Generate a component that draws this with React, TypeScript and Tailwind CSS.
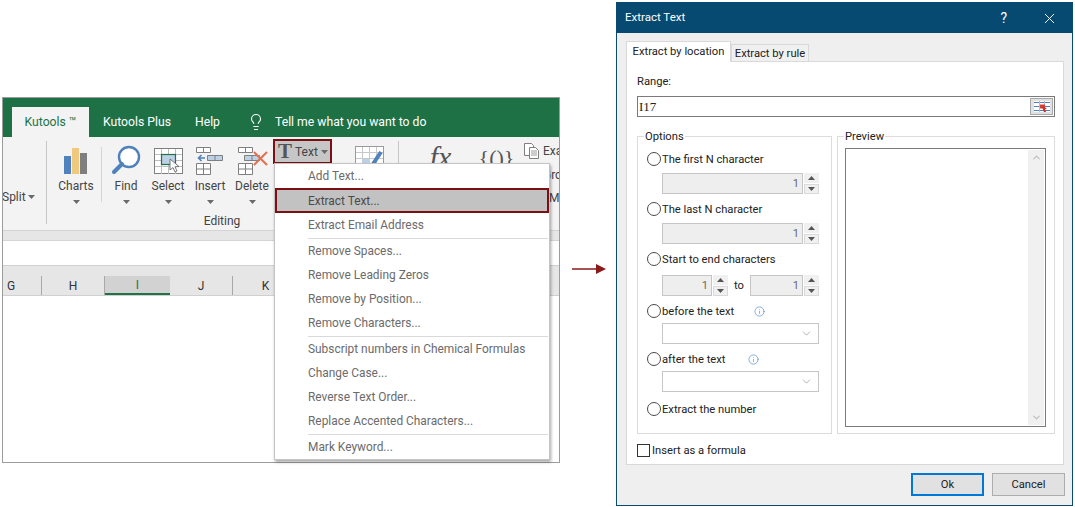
import { Lightbulb, X, ChevronDown, ChevronUp, Info } from "lucide-react";

function Caret({ className = "" }: { className?: string }) {
  return (
    <svg width="7" height="4" viewBox="0 0 7 4" className={className}>
      <path d="M0 0h7L3.5 4z" fill="#6a6a6a" />
    </svg>
  );
}

function ChartsIcon() {
  return (
    <svg width="24" height="27" viewBox="0 0 24 27">
      <rect x="0" y="8" width="7" height="18" fill="#4f81bd" />
      <rect x="8" y="0" width="7" height="26" fill="#f0c97f" />
      <rect x="16" y="5" width="7" height="21" fill="#7f7f7f" />
    </svg>
  );
}

function FindIcon() {
  return (
    <svg width="30" height="30" viewBox="0 0 30 30">
      <circle cx="18" cy="12" r="10" fill="#fff" stroke="#4f81bd" strokeWidth="2.4" />
      <path d="M11 19L3 27" stroke="#4f81bd" strokeWidth="4" strokeLinecap="round" />
    </svg>
  );
}

function SelectIcon() {
  return (
    <svg width="30" height="27" viewBox="0 0 30 27" className="ml-[2px]">
      <rect x="0.5" y="0.5" width="28" height="25" fill="#fff" stroke="#7f7f7f" />
      <path d="M7.5 1v25M14.5 1v25M21.5 1v25M1 6.5h27M1 12.5h27M1 18.5h27" stroke="#bdbdbd" />
      <rect x="7.5" y="6.5" width="14" height="10" fill="#bcd0e6" stroke="#217346" strokeWidth="1.2" />
      <path d="M16 11l0 11 3-2.4 2 4.4 2-1-2-4.2 4-.3z" fill="#fff" stroke="#6a6a6a" strokeWidth="0.9" />
    </svg>
  );
}

function InsertIcon() {
  return (
    <svg width="28" height="28" viewBox="0 0 28 28">
      <path d="M0.5 0.5h14v5h-14zM7.5 0.5v5" fill="#fff" stroke="#7f7f7f" />
      <path d="M0.5 16.5h14v11h-14zM7.5 16.5v11M0.5 22h14" fill="#fff" stroke="#7f7f7f" />
      <path d="M11.5 8.5h15v5h-15zM19 8.5v5" fill="#bcd0e6" stroke="#7f7f7f" />
      <path d="M9 11H3M5.5 8L2.5 11l3 3" fill="none" stroke="#4f81bd" strokeWidth="1.6" />
    </svg>
  );
}

function DeleteIcon() {
  return (
    <svg width="32" height="28" viewBox="0 0 32 28" className="ml-[3px]">
      <path d="M0.5 0.5h14v5h-14zM7.5 0.5v5" fill="#fff" stroke="#7f7f7f" />
      <path d="M0.5 16.5h14v11h-14zM7.5 16.5v11M0.5 22h14" fill="#fff" stroke="#7f7f7f" />
      <path d="M6.5 8.5h15v5h-15zM14 8.5v5" fill="#bcd0e6" stroke="#7f7f7f" />
      <path d="M16 5l13 13M29 5L16 18" stroke="#e07050" strokeWidth="2" />
    </svg>
  );
}

function TableEditIcon() {
  return (
    <svg width="30" height="30" viewBox="0 0 30 30">
      <rect x="0.5" y="0.5" width="28" height="28" fill="#fff" stroke="#9a9a9a" />
      <path d="M1 6.5h27M1 12.5h27M1 18.5h27M7.5 1v28M14.5 1v28M21.5 1v28" stroke="#c8c8c8" />
      <rect x="7" y="13" width="8" height="16" fill="#bcd0e6" />
      <path d="M14 24L26 6" stroke="#4f81bd" strokeWidth="4" />
    </svg>
  );
}

function CopyIcon() {
  return (
    <svg width="15" height="16" viewBox="0 0 15 16">
      <path d="M0.5 0.5h7l2 2v10h-9z" fill="#fff" stroke="#7f7f7f" />
      <path d="M5.5 4.5h6l3 3v8h-9z" fill="#fff" stroke="#7f7f7f" />
      <path d="M7 8h6M7 10h6M7 12h6" stroke="#9a9a9a" />
    </svg>
  );
}

function RangeIcon() {
  return (
    <svg width="16" height="11" viewBox="0 0 16 11">
      <rect width="16" height="11" fill="#fff" />
      <path d="M0 1.5h16M0 5.5h16M0 9.5h16" stroke="#4f81bd" />
      <path d="M5.5 0v11M10.5 0v11" stroke="#a9c0dc" />
      <path d="M6 3.5h5v4H6z" fill="#d8412f" />
      <path d="M8 5l5 2.5-2 .5 1 3h-2l-1-2.5z" fill="#c9301f" />
    </svg>
  );
}

function RibbonButton({ icon, label }: { icon: React.ReactNode; label: string }) {
  return (
    <div className="flex w-[42px] shrink-0 flex-col items-center">
      <div className="flex h-[38px] items-end justify-center">{icon}</div>
      <div className="mt-[3px] text-[12px] leading-[16px] text-[#444]">{label}</div>
      <Caret className="mt-[6px]" />
    </div>
  );
}

function MenuItem({ label }: { label: string }) {
  return <div className="flex h-[24px] items-center pl-[33px] pt-[2px] text-[#6b6b6b]">{label}</div>;
}

function MenuSep() {
  return (
    <div className="flex h-[2px] items-center pl-[33px] pr-[1px]">
      <div className="h-px w-full bg-[#d9d9d9]" />
    </div>
  );
}

function Radio({ label, info }: { label: string; info?: number }) {
  return (
    <div className="flex h-[20px] items-center pl-[9px]">
      <div className="h-[14px] w-[14px] rounded-full border border-[#4a4a4a] bg-white" />
      <span className="ml-[1px] mt-[2px] whitespace-nowrap">{label}</span>
      {info ? (
        <Info size={11} strokeWidth={1.5} className="text-[#4f8fd0]" style={{ marginLeft: info }} />
      ) : null}
    </div>
  );
}

function Spin({ width, value }: { width: string; value: string }) {
  return (
    <div className="flex h-[21px] text-[#6a6a6a]">
      <div className={`flex h-[21px] items-center justify-end border border-[#c6c6c6] bg-[#eeeeee] pr-[3px] pt-[2px] ${width}`}>
        {value}
      </div>
      <div className="ml-px flex w-[15px] flex-col gap-px">
        <div className="flex h-[10px] items-center justify-center bg-[#f0f0f0]">
          <svg width="7" height="4" viewBox="0 0 7 4">
            <path d="M0 4h7L3.5 0z" fill="#555" />
          </svg>
        </div>
        <div className="flex h-[10px] items-center justify-center border border-[#d9d9d9] bg-[#f0f0f0]">
          <svg width="7" height="4" viewBox="0 0 7 4">
            <path d="M0 0h7L3.5 4z" fill="#555" />
          </svg>
        </div>
      </div>
    </div>
  );
}

function Combo() {
  return (
    <div className="flex h-[21px] w-[157px] items-center justify-end border border-[#c6c6c6] bg-white pr-[5px]">
      <ChevronDown size={13} strokeWidth={1.2} className="text-[#888]" />
    </div>
  );
}

export default function App() {
  return (
    <div className="relative h-[507px] w-[1075px] overflow-hidden bg-white font-['Roboto',sans-serif] text-[12px]">
      {/* Excel window */}
      <div className="absolute left-[2px] top-[97px] flex h-[366px] w-[558px] flex-col overflow-hidden border border-[#9c9c9c] bg-white">
        <div className="flex h-[39px] shrink-0 items-end bg-[#1e7145] pl-[9px] text-[12.2px] text-white">
          <div className="flex h-[30px] w-[77px] items-center justify-center bg-[#f3f3f3] text-[#217346]">
            Kutools ™
          </div>
          <div className="flex h-[30px] w-[88px] items-center pl-[14px]">Kutools Plus</div>
          <div className="flex h-[30px] w-[69px] items-center pl-[18px]">Help</div>
          <div className="flex h-[30px] w-[29px] items-center pl-px">
            <Lightbulb size={18} strokeWidth={1.5} />
          </div>
          <div className="flex h-[30px] items-center">Tell me what you want to do</div>
        </div>

        <div className="flex h-[93px] shrink-0 bg-[#f3f3f3]">
          <div className="flex w-[43px] shrink-0 overflow-hidden pt-[52px]">
            <span className="-ml-[1px] h-[16px] leading-[16px] text-[#444]">Split</span>
            <Caret className="ml-[2px] mt-[6px]" />
          </div>
          <div className="mt-[4px] h-[83px] w-px shrink-0 bg-[#c6c6c6]" />
          <div className="flex w-[54px] shrink-0 justify-center pl-[4px]">
            <RibbonButton icon={<ChartsIcon />} label="Charts" />
          </div>
          <div className="mt-[10px] h-[55px] w-px shrink-0 bg-[#d4d4d4]" />
          <div className="flex w-[240px] shrink-0 flex-col">
            <div className="flex h-[75px] pl-[3px]">
              <RibbonButton icon={<FindIcon />} label="Find" />
              <RibbonButton icon={<SelectIcon />} label="Select" />
              <RibbonButton icon={<InsertIcon />} label="Insert" />
              <RibbonButton icon={<DeleteIcon />} label="Delete" />
              <div className="mt-[2px] flex h-[25px] w-[59px] shrink-0 items-center border-2 border-[#7b0f12] bg-[#c6c6c6] pl-[3px] text-[#444]">
                <span className="font-['Liberation_Serif',serif] text-[21px] font-bold leading-none text-[#555]">T</span>
                <span className="ml-[3px]">Text</span>
                <Caret className="ml-[3px]" />
              </div>
            </div>
            <div className="h-[16px] pt-px text-center leading-[16px] text-[#444]">Editing</div>
          </div>
          <div className="flex w-[56px] shrink-0 justify-center pt-[9px]">
            <TableEditIcon />
          </div>
          <div className="mt-[4px] h-[83px] w-px shrink-0 bg-[#c6c6c6]" />
          <div className="w-[71px] shrink-0 pl-[12px] pt-[2px] text-center font-['Liberation_Serif',serif] text-[30px] italic leading-[36px] text-[#555]">
            fx
          </div>
          <div className="w-[53px] shrink-0 pt-[5px] text-center font-['Liberation_Serif',serif] text-[22px] leading-[32px] text-[#555]">
            {"{()}"}
          </div>
          <div className="flex shrink-0 flex-col pl-[1px] pt-[6px] text-[#444]">
            <div className="flex h-[16px] items-center whitespace-nowrap">
              <CopyIcon />
              <span className="ml-[4px]">Exact Copy</span>
            </div>
            <div className="mt-[8px] h-[16px] whitespace-nowrap pl-[19px] leading-[16px]">Group</div>
            <div className="mt-[7px] h-[16px] whitespace-nowrap pl-[25px] leading-[16px]">More</div>
          </div>
        </div>

        <div className="h-[11px] shrink-0 border-y border-[#d4d4d4] bg-[#e6e6e6]" />
        <div className="h-[24px] shrink-0 bg-white" />
        <div className="flex h-[31px] shrink-0 items-end border-y border-[#d0d0d0] bg-[#e6e6e6] text-[#333]">
          <div className="flex h-[19px] w-[39px] items-center border-r border-[#a8a8a8] pl-[4px]">G</div>
          <div className="flex h-[19px] w-[63px] items-center justify-center border-r border-[#a8a8a8]">H</div>
          <div className="flex h-[19px] w-[65px] items-center justify-center border-b-2 border-[#217346] bg-[#d2d2d2] text-[#217346]">
            I
          </div>
          <div className="flex h-[19px] w-[63px] items-center justify-center border-r border-[#a8a8a8]">J</div>
          <div className="flex h-[19px] w-[65px] items-center justify-center">K</div>
        </div>
      </div>

      {/* Text menu */}
      <div className="absolute left-[274px] top-[163px] w-[276px] border border-[#c4c4c4] bg-white text-[11.9px] shadow-[1px_2px_3px_rgba(0,0,0,0.35)]">
        <MenuItem label="Add Text..." />
        <div className="flex h-[25px] items-center border-2 border-[#7b0f12] bg-[#c2c2c2] pl-[31px] pt-[2px] text-[#4a4a4a]">
          Extract Text...
        </div>
        <MenuItem label="Extract Email Address" />
        <MenuSep />
        <MenuItem label="Remove Spaces..." />
        <MenuItem label="Remove Leading Zeros" />
        <MenuItem label="Remove by Position..." />
        <MenuItem label="Remove Characters..." />
        <MenuSep />
        <MenuItem label="Subscript numbers in Chemical Formulas" />
        <MenuItem label="Change Case..." />
        <MenuItem label="Reverse Text Order..." />
        <MenuItem label="Replace Accented Characters..." />
        <MenuSep />
        <MenuItem label="Mark Keyword..." />
      </div>

      {/* Arrow between the two shots */}
      <svg width="36" height="12" viewBox="0 0 36 12" className="absolute left-[571px] top-[263px]">
        <path d="M1 6h26" stroke="#8b1a1a" strokeWidth="1.5" />
        <path d="M25 1l10 5-10 5z" fill="#8b1a1a" />
      </svg>

      {/* Dialog */}
      <div className="absolute left-[616px] top-[2px] flex h-[504px] w-[457px] flex-col border border-[#0b4a70] bg-[#efefef] text-[11.2px] text-[#222]">
        <div className="flex h-[30px] shrink-0 items-center bg-[#064a72] pl-[8px] pr-[14px] text-[11.5px] text-white">
          <span>Extract Text</span>
          <span className="ml-auto text-[14px]">?</span>
          <X size={17} strokeWidth={1.3} className="ml-[34px]" />
        </div>

        <div className="px-[9px] pt-[8px]">
          <div className="relative z-10 flex h-[21px] items-end">
            <div className="flex h-[21px] w-[105px] items-center justify-center border border-b-0 border-[#d9d9d9] bg-white">
              Extract by location
            </div>
            <div className="flex h-[18px] w-[78px] items-center justify-center whitespace-nowrap border border-[#d9d9d9] bg-[#f0f0f0] pt-[2px]">
              Extract by rule
            </div>
          </div>
          <div className="-mt-px flex h-[404px] w-[438px] flex-col border border-[#d9d9d9] bg-white pl-[10px] pt-[11px]">
            <div className="h-[16px] pt-px leading-[16px]">Range:</div>
            <div className="mt-[7px] flex h-[21px] w-[418px] items-center border border-[#7a7a7a] pl-[1px] pr-px">
              <span className="font-['Liberation_Serif',serif] text-[13px]">I17</span>
              <div className="ml-auto flex h-[17px] w-[23px] items-center justify-center border border-[#a8a8a8] bg-[#e1e1e1]">
                <RangeIcon />
              </div>
            </div>

            <div className="mt-[19px] flex gap-[5px]">
              <div className="relative h-[298px] w-[195px] border border-[#dcdcdc]">
                <span className="absolute -top-[8px] left-[6px] bg-white px-px leading-[16px]">Options</span>
                <div className="pt-[12px]">
                  <Radio label="The first N character" />
                  <div className="ml-[24px] mt-[4px]">
                    <Spin width="w-[141px]" value="1" />
                  </div>
                  <div className="mt-[5px]">
                    <Radio label="The last N character" />
                  </div>
                  <div className="ml-[24px] mt-[4px]">
                    <Spin width="w-[141px]" value="1" />
                  </div>
                  <div className="mt-[5px]">
                    <Radio label="Start to end characters" />
                  </div>
                  <div className="ml-[24px] mt-[6px] flex items-center">
                    <Spin width="w-[50px]" value="1" />
                    <span className="w-[22px] pt-[2px] text-center">to</span>
                    <Spin width="w-[53px]" value="1" />
                  </div>
                  <div className="mt-[5px]">
                    <Radio label="before the text" info={20} />
                  </div>
                  <div className="ml-[24px] mt-[2px]">
                    <Combo />
                  </div>
                  <div className="mt-[5px]">
                    <Radio label="after the text" info={23} />
                  </div>
                  <div className="ml-[24px] mt-[2px]">
                    <Combo />
                  </div>
                  <div className="mt-[7px]">
                    <Radio label="Extract the number" />
                  </div>
                </div>
              </div>

              <div className="relative h-[298px] w-[218px] border border-[#dcdcdc]">
                <span className="absolute -top-[8px] left-[6px] bg-white px-px leading-[16px]">Preview</span>
                <div className="ml-[7px] mt-[11px] flex h-[279px] w-[201px] justify-end border border-[#7a7a7a] p-px">
                  <div className="flex w-[16px] flex-col items-center justify-between bg-[#f0f0f0] py-[2px]">
                    <ChevronUp size={11} strokeWidth={2.4} className="text-[#bcbcbc]" />
                    <ChevronDown size={11} strokeWidth={2.4} className="text-[#bcbcbc]" />
                  </div>
                </div>
              </div>
            </div>

            <div className="mt-[9px] flex h-[14px] items-center">
              <div className="h-[13px] w-[13px] border border-[#333] bg-white" />
              <span className="ml-[2px] mt-[2px]">Insert as a formula</span>
            </div>
          </div>
        </div>

        <div className="flex justify-end gap-[8px] pr-[7px] pt-[8px]">
          <div className="flex h-[23px] w-[73px] items-center justify-center border-2 border-[#0078d7] bg-[#e1e1e1] pt-px">Ok</div>
          <div className="flex h-[23px] w-[73px] items-center justify-center border border-[#adadad] bg-[#e1e1e1] pt-px">Cancel</div>
        </div>
      </div>
    </div>
  );
}
